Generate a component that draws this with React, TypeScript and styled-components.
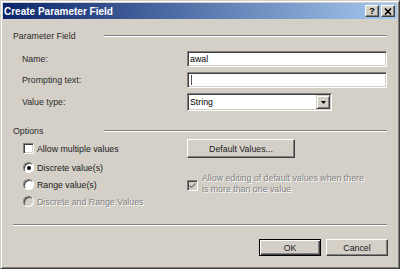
import React from "react";
import styled, { createGlobalStyle } from "styled-components";

const Global = createGlobalStyle`
  html, body { margin: 0; padding: 0; background: #d4d0c8; }
  body { font-family: "Liberation Sans", Arial, sans-serif; }
`;

const Window = styled.div`
  width: 400px;
  height: 269px;
  box-sizing: border-box;
  background: #d4d0c8;
  border: 1px solid;
  border-color: #d4d0c8 #404040 #404040 #d4d0c8;
  box-shadow: inset 1px 1px #fff, inset -1px -1px #808080;
  padding: 2px;
  display: flex;
  flex-direction: column;
  font-size: 8.8px;
  color: #1a1a1a;
`;

const TitleBar = styled.div`
  height: 16px;
  flex: none;
  background: linear-gradient(90deg, #0a246a 0%, #a6caf0 100%);
  display: flex;
  align-items: center;
  justify-content: space-between;
  padding: 0 2px 0 1px;
`;

const Title = styled.span`
  color: #fff;
  font-weight: bold;
  font-size: 10px;
  white-space: nowrap;
`;

const CaptionButtons = styled.div`
  display: flex;
  gap: 2px;
`;

const CaptionButton = styled.div`
  width: 14px;
  height: 12px;
  box-sizing: border-box;
  background: #d4d0c8;
  border: 1px solid;
  border-color: #fff #404040 #404040 #fff;
  box-shadow: inset -1px -1px #808080;
  display: flex;
  align-items: center;
  justify-content: center;
  font-weight: bold;
  font-size: 9px;
  line-height: 1;
  color: #000;
`;

const Body = styled.div`
  flex: 1;
  display: flex;
  flex-direction: column;
  padding: 11px 10px 0 10px;
`;

const GroupHeader = styled.div<{ $top?: number }>`
  display: grid;
  grid-template-columns: 91px 1fr;
  align-items: center;
  height: 12px;
  margin-top: ${(p) => p.$top ?? 0}px;
  color: #2a2a2a;
`;

const Etched = styled.div<{ $top?: number }>`
  height: 0;
  border-top: 1px solid #808080;
  border-bottom: 1px solid #fff;
  margin-top: ${(p) => p.$top ?? 0}px;
`;

const FieldGrid = styled.div`
  margin-top: 9px;
  display: grid;
  grid-template-columns: 174px 1fr;
  row-gap: 5px;
  align-items: center;
`;

const FieldLabel = styled.span`
  padding-left: 9px;
  color: #2a2a2a;
`;

const Sunken = styled.div<{ $h: number; $w?: number }>`
  height: ${(p) => p.$h}px;
  width: ${(p) => (p.$w ? `${p.$w}px` : "auto")};
  box-sizing: border-box;
  background: #fff;
  border: 1px solid;
  border-color: #808080 #fff #fff #808080;
  box-shadow: inset 1px 1px #404040, inset -1px -1px #d4d0c8;
  display: flex;
  align-items: center;
  padding-left: 2px;
  position: relative;
  color: #000;
`;

const Caret = styled.span`
  width: 1px;
  height: 10px;
  background: #555;
  margin-left: 1px;
`;

const DropButton = styled.div`
  position: absolute;
  right: 1px;
  top: 1px;
  bottom: 1px;
  width: 14px;
  box-sizing: border-box;
  background: #d4d0c8;
  border: 1px solid;
  border-color: #d4d0c8 #404040 #404040 #d4d0c8;
  box-shadow: inset 1px 1px #fff, inset -1px -1px #808080;
  display: flex;
  align-items: center;
  justify-content: center;
`;

const OptionsGrid = styled.div`
  margin-top: 2px;
  display: grid;
  grid-template-columns: 174px 1fr;
`;

const LeftColumn = styled.div`
  display: flex;
  flex-direction: column;
  padding-left: 10px;
`;

const RightColumn = styled.div`
  display: flex;
  flex-direction: column;
  align-items: flex-start;
`;

const OptionRow = styled.div<{ $h: number; $top?: number; $disabled?: boolean }>`
  height: ${(p) => p.$h}px;
  margin-top: ${(p) => p.$top ?? 0}px;
  display: flex;
  align-items: center;
  gap: 3px;
  color: ${(p) => (p.$disabled ? "#808080" : "#1a1a1a")};
  text-shadow: ${(p) => (p.$disabled ? "1px 1px #fff" : "none")};
  white-space: nowrap;
`;

const CheckBox = styled.div<{ $disabled?: boolean }>`
  width: 11px;
  height: 11px;
  flex: none;
  box-sizing: border-box;
  background: ${(p) => (p.$disabled ? "#d4d0c8" : "#fff")};
  border: 1px solid;
  border-color: #808080 #fff #fff #808080;
  box-shadow: inset 1px 1px #404040, inset -1px -1px #d4d0c8;
  display: flex;
  align-items: center;
  justify-content: center;
`;

const Radio = styled.div<{ $disabled?: boolean }>`
  width: 11px;
  height: 11px;
  flex: none;
  box-sizing: border-box;
  border-radius: 50%;
  background: ${(p) => (p.$disabled ? "#d4d0c8" : "#fff")};
  border: 1px solid;
  border-color: #808080 #fff #fff #808080;
  box-shadow: inset 1px 1px #404040;
  display: flex;
  align-items: center;
  justify-content: center;
`;

const Dot = styled.div`
  width: 4px;
  height: 4px;
  border-radius: 50%;
  background: #000;
`;

const PushButton = styled.div<{ $w: number; $h: number; $default?: boolean }>`
  width: ${(p) => p.$w}px;
  height: ${(p) => p.$h}px;
  box-sizing: border-box;
  background: #d4d0c8;
  border: 1px solid;
  border-color: ${(p) => (p.$default ? "#000" : "#fff #404040 #404040 #fff")};
  box-shadow: ${(p) =>
    p.$default
      ? "inset 1px 1px #fff, inset -1px -1px #404040, inset -2px -2px #808080"
      : "inset -1px -1px #808080"};
  display: flex;
  align-items: center;
  justify-content: center;
  color: #1a1a1a;
  white-space: nowrap;
`;

const EditingOption = styled.div`
  margin-top: 15px;
  display: flex;
  align-items: flex-start;
  gap: 4px;
  color: #808080;
  text-shadow: 1px 1px #fff;
  line-height: 11px;
`;

const BoxSpacer = styled.div`
  margin-top: 7px;
`;

const ButtonRow = styled.div`
  margin-top: 13px;
  display: flex;
  justify-content: flex-end;
  gap: 5px;
  margin-right: -1px;
`;

export default function App() {
  return (
    <>
      <Global />
      <Window>
        <TitleBar>
          <Title>Create Parameter Field</Title>
          <CaptionButtons>
            <CaptionButton>?</CaptionButton>
            <CaptionButton>
              <svg width="8" height="7" viewBox="0 0 8 7">
                <path d="M1 0.5 L7 6.5 M7 0.5 L1 6.5" stroke="#000" strokeWidth="1.6" />
              </svg>
            </CaptionButton>
          </CaptionButtons>
        </TitleBar>
        <Body>
          <GroupHeader>
            <span>Parameter Field</span>
            <Etched />
          </GroupHeader>
          <FieldGrid>
            <FieldLabel>Name:</FieldLabel>
            <Sunken $h={16}>awal</Sunken>
            <FieldLabel>Prompting text:</FieldLabel>
            <Sunken $h={16}>
              <Caret />
            </Sunken>
            <FieldLabel>Value type:</FieldLabel>
            <Sunken $h={18} $w={145}>
              String
              <DropButton>
                <svg width="5" height="3" viewBox="0 0 5 3">
                  <path d="M0 0 H5 L2.5 3 Z" fill="#000" />
                </svg>
              </DropButton>
            </Sunken>
          </FieldGrid>
          <GroupHeader $top={14}>
            <span>Options</span>
            <Etched />
          </GroupHeader>
          <OptionsGrid>
            <LeftColumn>
              <OptionRow $h={19}>
                <CheckBox />
                Allow multiple values
              </OptionRow>
              <OptionRow $h={17} $top={1}>
                <Radio>
                  <Dot />
                </Radio>
                Discrete value(s)
              </OptionRow>
              <OptionRow $h={17}>
                <Radio />
                Range value(s)
              </OptionRow>
              <OptionRow $h={17} $disabled>
                <Radio $disabled />
                Discrete and Range Values
              </OptionRow>
            </LeftColumn>
            <RightColumn>
              <PushButton $w={108} $h={19}>Default Values...</PushButton>
              <EditingOption>
                <BoxSpacer>
                  <CheckBox $disabled>
                    <svg width="7" height="6" viewBox="0 0 7 6">
                      <path d="M0.5 2.5 L2.5 4.5 L6.5 0.5" stroke="#808080" strokeWidth="1.4" fill="none" />
                    </svg>
                  </CheckBox>
                </BoxSpacer>
                <span>
                  Allow editing of default values when there
                  <br />
                  is more than one value
                </span>
              </EditingOption>
            </RightColumn>
          </OptionsGrid>
          <Etched $top={14} />
          <ButtonRow>
            <PushButton $w={62} $h={17} $default>OK</PushButton>
            <PushButton $w={62} $h={17}>Cancel</PushButton>
          </ButtonRow>
        </Body>
      </Window>
    </>
  );
}
